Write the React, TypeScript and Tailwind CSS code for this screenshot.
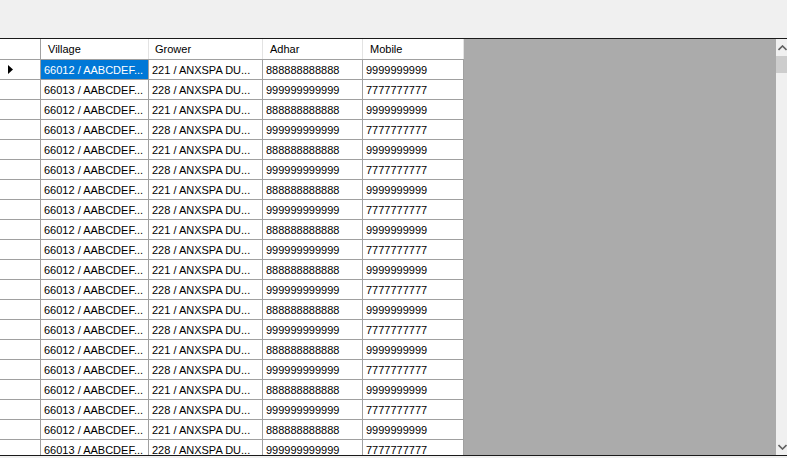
import React from 'react';

const rowsA = { village: '66012 / AABCDEF...', grower: '221 / ANXSPA DU...', adhar: '888888888888', mobile: '9999999999' };
const rowsB = { village: '66013 / AABCDEF...', grower: '228 / ANXSPA DU...', adhar: '999999999999', mobile: '7777777777' };

const rows = Array.from({ length: 20 }, (_, i) => (i % 2 === 0 ? rowsA : rowsB));

function RowArrow() {
  return (
    <svg width="6" height="9" viewBox="0 0 6 9" className="ml-[8px]">
      <polygon points="0,0 5,4.5 0,9" fill="#000" />
    </svg>
  );
}

export default function App() {
  return (
    <div
      className="w-[787px] h-[458px] flex flex-col bg-[#f0f0f0] overflow-hidden text-[11px] text-black"
      style={{ fontFamily: '"Liberation Sans", Arial, sans-serif' }}
    >
      <div className="h-[38px] shrink-0 bg-[#f0f0f0]" />
      <div className="h-[418px] shrink-0 flex border-t border-b border-[#1a1a1a] bg-[#ababab]">
        <div className="flex-1 overflow-hidden">
          <div className="w-[464px] bg-white">
            {/* Column headers */}
            <div className="flex h-[21px] border-b border-[#a0a0a0]">
              <div className="w-[41px] border-r border-[#a0a0a0]" />
              <div className="w-[108px] border-r border-[#e3e3e3] pl-[7px] pt-[1px] leading-[19px]">Village</div>
              <div className="w-[114px] border-r border-[#e3e3e3] pl-[6px] pt-[1px] leading-[19px]">Grower</div>
              <div className="w-[100px] border-r border-[#e3e3e3] pl-[7px] pt-[1px] leading-[19px]">Adhar</div>
              <div className="w-[101px] border-r border-[#e3e3e3] pl-[7px] pt-[1px] leading-[19px]">Mobile</div>
            </div>
            {rows.map((r, i) => (
              <div key={i} className="flex h-[20px] border-b border-[#a0a0a0]">
                <div className="w-[41px] border-r border-[#a0a0a0] flex items-center">
                  {i === 0 && <RowArrow />}
                </div>
                <div
                  className={`w-[108px] border-r border-[#a0a0a0] pl-[3px] pt-[1px] leading-[18px] whitespace-nowrap ${
                    i === 0 ? 'bg-[#0078d7] text-white' : ''
                  }`}
                >
                  {r.village}
                </div>
                <div className="w-[114px] border-r border-[#a0a0a0] pl-[3px] pt-[1px] leading-[18px] whitespace-nowrap">{r.grower}</div>
                <div className="w-[100px] border-r border-[#a0a0a0] pl-[3px] pt-[1px] leading-[18px]">{r.adhar}</div>
                <div className="w-[101px] border-r border-[#a0a0a0] pl-[3px] pt-[1px] leading-[18px]">{r.mobile}</div>
              </div>
            ))}
          </div>
        </div>
        {/* Vertical scrollbar */}
        <div className="w-[11px] shrink-0 flex flex-col bg-[#f0f0f0]">
          <div className="h-[17px] flex items-center justify-start pl-[2px]">
            <svg width="9" height="6" viewBox="0 0 9 6">
              <polyline points="0.5,5 4.5,1 8.5,5" fill="none" stroke="#606060" strokeWidth="1.6" />
            </svg>
          </div>
          <div className="h-[17px] bg-[#cdcdcd]" />
          <div className="flex-1" />
          <div className="h-[17px] flex items-center justify-start pl-[2px]">
            <svg width="9" height="6" viewBox="0 0 9 6">
              <polyline points="0.5,1 4.5,5 8.5,1" fill="none" stroke="#606060" strokeWidth="1.6" />
            </svg>
          </div>
        </div>
      </div>
      <div className="flex-1 bg-[#f0f0f0]" />
    </div>
  );
}
